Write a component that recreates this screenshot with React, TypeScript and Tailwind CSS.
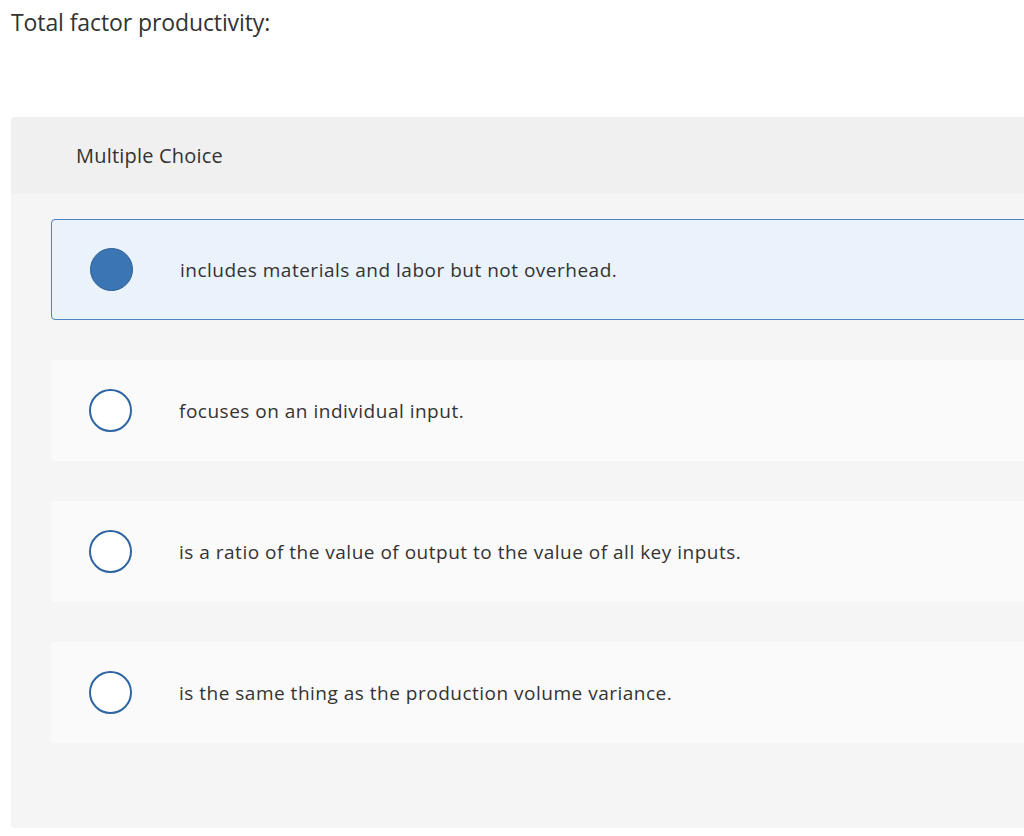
const options = [
  "includes materials and labor but not overhead.",
  "focuses on an individual input.",
  "is a ratio of the value of output to the value of all key inputs.",
  "is the same thing as the production volume variance.",
];

const selected = 0;

export default function App() {
  return (
    <div
      className="h-[836px] w-[1024px] overflow-hidden bg-white text-[#333333]"
      style={{ fontFamily: "'Open Sans', sans-serif" }}
    >
      <h1 className="pl-[11px] pt-[8px] text-[23px] leading-[28px] tracking-[-0.1px]">Total factor productivity:</h1>

      <section className="ml-[11px] mt-[81px] w-[1040px] rounded-[4px] bg-[#f5f5f5] pb-[85px]">
        <div className="flex h-[77px] items-center rounded-t-[4px] bg-[#f0f0f0] pl-[65px] text-[20px] tracking-[0.2px]">
          Multiple Choice
        </div>

        <div className="flex flex-col gap-[40px] pl-[40px] pt-[25px]">
          {options.map((text, index) => {
            const active = index === selected;
            return (
              <div
                key={text}
                className={`flex h-[101px] items-center rounded-[4px] ${
                  active ? "border-[1.5px] border-[#4a82c2] bg-[#eaf2fb]" : "bg-[#fafafa]"
                }`}
              >
                <span
                  className={`ml-[38px] h-[43px] w-[43px] shrink-0 rounded-full ${
                    active ? "border border-[#2d5f97] bg-[#3b75b4]" : "border-2 border-[#2f65a3] bg-white"
                  }`}
                />
                <span className="ml-[47px] pt-[2px] text-[19px] tracking-[0.5px]">{text}</span>
              </div>
            );
          })}
        </div>
      </section>
    </div>
  );
}
